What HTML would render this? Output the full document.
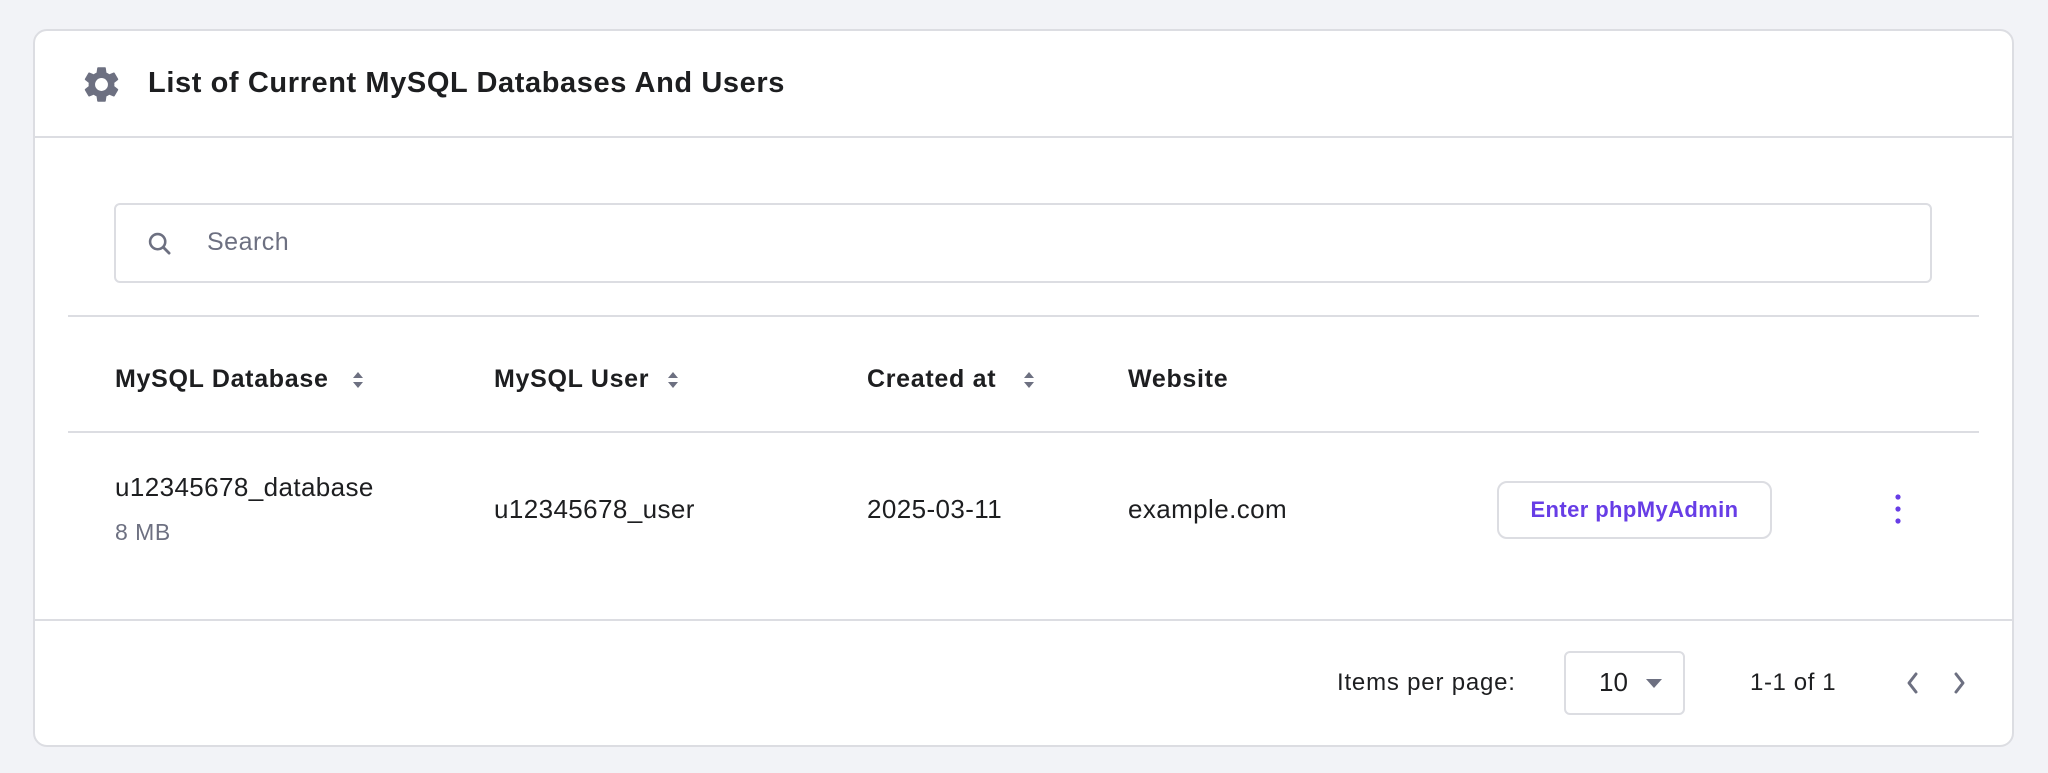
<!DOCTYPE html>
<html><head><meta charset="utf-8"><style>
*{box-sizing:border-box;margin:0;padding:0}
body{width:2048px;height:773px;background:#f2f3f7;font-family:"Liberation Sans",sans-serif;color:#1d1e20;position:relative;overflow:hidden}
.card{position:absolute;left:33px;top:29px;width:1981px;height:718px;background:#fff;border:2px solid #dcdde2;border-radius:14px}
.a{position:absolute;white-space:nowrap}
.line{position:absolute;height:2px;background:#dcdde2}
.h{font-weight:bold;font-size:25px;letter-spacing:0.7px}
.r{font-size:26px;letter-spacing:0.4px}
</style></head><body>
<div class="card"></div>
<svg class="a" style="left:80px;top:63px" width="43" height="43" viewBox="0 0 24 24"><path fill="#6d7081" d="M19.14 12.94c.04-.3.06-.61.06-.94s-.02-.64-.07-.94l2.03-1.58a.49.49 0 0 0 .12-.61l-1.92-3.320a.49.49 0 0 0-.59-.22l-2.39.96c-.5-.38-1.030-.7-1.620-.94l-.36-2.54a.48.48 0 0 0-.48-.41h-3.84a.48.48 0 0 0-.47.41l-.36 2.54c-.59.24-1.13.57-1.62.94l-2.39-.96a.48.48 0 0 0-.59.22L2.74 8.87a.47.47 0 0 0 .12.61l2.03 1.58c-.05.3-.09.63-.09.94s.02.64.07.94l-2.03 1.58a.49.49 0 0 0-.12.61l1.92 3.32c.12.22.37.29.59.22l2.39-.96c.5.38 1.03.7 1.62.94l.36 2.54c.05.24.24.41.48.41h3.84c.24 0 .44-.17.47-.41l.36-2.54c.59-.24 1.13-.56 1.62-.94l2.39.96c.22.08.47 0 .59-.22l1.920-3.32a.47.47 0 0 0-.12-.61l-2.01-1.58zM12 15.6A3.6 3.6 0 1 1 12 8.4a3.6 3.6 0 0 1 0 7.2z"/></svg>
<div class="a" style="left:148px;top:67px;font-size:29px;font-weight:bold;letter-spacing:0.6px">List of Current MySQL Databases And Users</div>
<div class="line" style="left:35px;top:136px;width:1977px"></div>
<div class="a" style="left:114px;top:203px;width:1818px;height:80px;border:2px solid #dcdde2;border-radius:6px"></div>
<svg class="a" style="left:146px;top:230px" width="28" height="28" viewBox="0 0 24 24"><circle cx="10" cy="10" r="6.5" fill="none" stroke="#6d7081" stroke-width="2.2"/><path d="M14.8 14.8l5 5" stroke="#6d7081" stroke-width="2.4" stroke-linecap="round"/></svg>
<div class="a" style="left:207px;top:228px;font-size:25px;color:#6d7081;letter-spacing:0.5px">Search</div>
<div class="line" style="left:68px;top:315px;width:1911px"></div>
<div class="a h" style="left:115px;top:365px">MySQL Database</div>
<div class="a h" style="left:494px;top:365px">MySQL User</div>
<div class="a h" style="left:867px;top:365px">Created at</div>
<div class="a h" style="left:1128px;top:365px">Website</div>
<svg class="a" style="left:351px;top:368px" width="14" height="24" viewBox="0 0 14 24"><path d="M2 10l5-6 5 6zM2 14l5 6 5-6z" fill="#6d7081"/></svg>
<svg class="a" style="left:666px;top:368px" width="14" height="24" viewBox="0 0 14 24"><path d="M2 10l5-6 5 6zM2 14l5 6 5-6z" fill="#6d7081"/></svg>
<svg class="a" style="left:1022px;top:368px" width="14" height="24" viewBox="0 0 14 24"><path d="M2 10l5-6 5 6zM2 14l5 6 5-6z" fill="#6d7081"/></svg>
<div class="line" style="left:68px;top:431px;width:1911px"></div>
<div class="a r" style="left:115px;top:472px">u12345678_database</div>
<div class="a" style="left:115px;top:519px;font-size:23px;color:#6d7081;letter-spacing:0.5px">8 MB</div>
<div class="a r" style="left:494px;top:494px">u12345678_user</div>
<div class="a r" style="left:867px;top:494px">2025-03-11</div>
<div class="a r" style="left:1128px;top:494px">example.com</div>
<div class="a" style="left:1497px;top:481px;width:275px;height:58px;border:2px solid #dcdde2;border-radius:10px;color:#673de6;font-weight:bold;font-size:22px;letter-spacing:0.4px;text-align:center;line-height:54px">Enter phpMyAdmin</div>
<svg class="a" style="left:1892px;top:493px" width="12" height="32" viewBox="0 0 12 32"><circle cx="6" cy="4" r="2.6" fill="#673de6"/><circle cx="6" cy="16" r="2.6" fill="#673de6"/><circle cx="6" cy="28" r="2.6" fill="#673de6"/></svg>
<div class="line" style="left:35px;top:619px;width:1977px"></div>
<div class="a" style="left:1337px;top:669px;font-size:24px;letter-spacing:0.8px">Items per page:</div>
<div class="a" style="left:1564px;top:651px;width:121px;height:64px;border:2px solid #dcdde2;border-radius:6px"></div>
<div class="a" style="left:1599px;top:667px;font-size:26px">10</div>
<svg class="a" style="left:1644px;top:676px" width="20" height="14" viewBox="0 0 20 14"><path d="M2 3h16l-8 9z" fill="#6d7081"/></svg>
<div class="a" style="left:1750px;top:669px;font-size:24px;letter-spacing:0.6px">1-1 of 1</div>
<svg class="a" style="left:1903px;top:670px" width="20" height="26" viewBox="0 0 20 26"><path d="M13 4l-7 9 7 9" fill="none" stroke="#6d7081" stroke-width="3" stroke-linecap="round" stroke-linejoin="round"/></svg>
<svg class="a" style="left:1949px;top:670px" width="20" height="26" viewBox="0 0 20 26"><path d="M7 4l7 9-7 9" fill="none" stroke="#6d7081" stroke-width="3" stroke-linecap="round" stroke-linejoin="round"/></svg>
</body></html>
